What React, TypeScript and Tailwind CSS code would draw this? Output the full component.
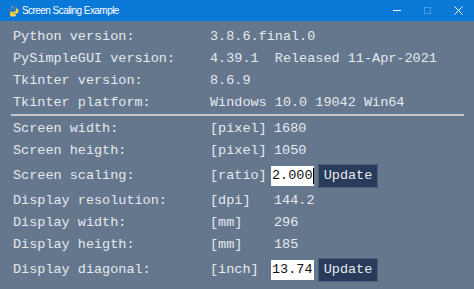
import React from "react"

const mono = { fontFamily: '"Liberation Mono", "Courier New", monospace' }

const topRows = [
  ["Python version:", "3.8.6.final.0"],
  ["PySimpleGUI version:", "4.39.1  Released 11-Apr-2021"],
  ["Tkinter version:", "8.6.9"],
  ["Tkinter platform:", "Windows 10.0 19042 Win64"],
]

function PythonIcon() {
  return (
    <svg width="11" height="12" viewBox="0 0 22 24">
      {/* blue half */}
      <path d="M11 1C6 1 6.5 3 6.5 3v3H11.5v1H4C1.5 7 1 9.5 1 12c0 3 1 5 3 5h2v-3c0-2 2-3.5 4-3.5h5c2 0 3-1.5 3-3V3.5C18 1.5 16 1 11 1z" fill="#3c78b4" />
      {/* yellow half */}
      <path d="M11 23c5 0 4.5-2 4.5-2v-3H10.5v-1H18c2.5 0 3-2.5 3-5 0-3-1-5-3-5h-2v3c0 2-2 3.5-4 3.5H7c-2 0-3 1.5-3 3v4c0 2 2 2.5 7 2.5z" fill="#f5d33c" />
      <circle cx="8.5" cy="3.6" r="1" fill="#fff" />
      <circle cx="13.5" cy="20.4" r="1" fill="#fff" />
    </svg>
  )
}

function TitleBar() {
  return (
    <div className="flex h-[21px] items-center bg-[#0a78d7] text-white">
      <div className="ml-[8px] mr-[3px] flex items-center">
        <PythonIcon />
      </div>
      <span
        className="text-[10px] tracking-[-0.55px]"
        style={{ fontFamily: '"Liberation Sans", Arial, sans-serif' }}
      >
        Screen Scaling Example
      </span>
      <div className="ml-auto flex h-full items-center">
        <div className="flex w-[30px] items-center justify-center">
          <div className="h-px w-[8px] bg-white" />
        </div>
        <div className="flex w-[30px] items-center justify-center">
          <div className="h-[7px] w-[7px] border border-[#4d9ce3]" />
        </div>
        <div className="flex w-[32px] items-center justify-center">
          <svg width="9" height="9" viewBox="0 0 9 9">
            <path d="M0.5 0.5l8 8M8.5 0.5l-8 8" stroke="#fff" strokeWidth="1" />
          </svg>
        </div>
      </div>
    </div>
  )
}

function InputRow({ label, unit, value, focused }: { label: string; unit: string; value: string; focused?: boolean }) {
  return (
    <div className="grid h-[28px] grid-cols-[197px_61px_1fr] items-center">
      <span>{label}</span>
      <span>{unit}</span>
      <div className="flex items-center gap-[4px]">
        <div className="flex h-[20px] w-[43px] items-center bg-white pl-[1px] text-[#111]">
          <span>{value}</span>
          {focused && <span className="h-[16px] w-px bg-black" />}
        </div>
        <button className="h-[24px] w-[60px] border border-[#4b5e7b] bg-[#283b5b] text-[#e8ebef]">
          Update
        </button>
      </div>
    </div>
  )
}

function UnitRow({ label, unit, value }: { label: string; unit: string; value: string }) {
  return (
    <div className="grid h-[22px] grid-cols-[197px_61px_1fr] items-center">
      <span>{label}</span>
      <span>{unit}</span>
      <span className="pl-[3px]">{value}</span>
    </div>
  )
}

export default function App() {
  return (
    <div className="h-[289px] w-[474px] overflow-hidden bg-[#64778d]">
      <TitleBar />
      <div
        className="whitespace-pre pl-[13px] pt-[5px] text-[13.5px] leading-[22px] text-[#e6e9ee]"
        style={mono}
      >
        {topRows.map(([label, value]) => (
          <div key={label} className="grid h-[22px] grid-cols-[197px_1fr] items-center">
            <span>{label}</span>
            <span>{value}</span>
          </div>
        ))}

        {/* separator */}
        <div className="mb-[2px] ml-[-2px] mr-[10px] h-[2px] bg-[#c3c9d1]" />

        <UnitRow label="Screen width:" unit="[pixel]" value="1680" />
        <UnitRow label="Screen heigth:" unit="[pixel]" value="1050" />
        <InputRow label="Screen scaling:" unit="[ratio]" value="2.000" focused />
        <UnitRow label="Display resolution:" unit="[dpi]" value="144.2" />
        <UnitRow label="Display width:" unit="[mm]" value="296" />
        <UnitRow label="Display heigth:" unit="[mm]" value="185" />
        <InputRow label="Display diagonal:" unit="[inch]" value="13.74" />
      </div>
    </div>
  )
}
